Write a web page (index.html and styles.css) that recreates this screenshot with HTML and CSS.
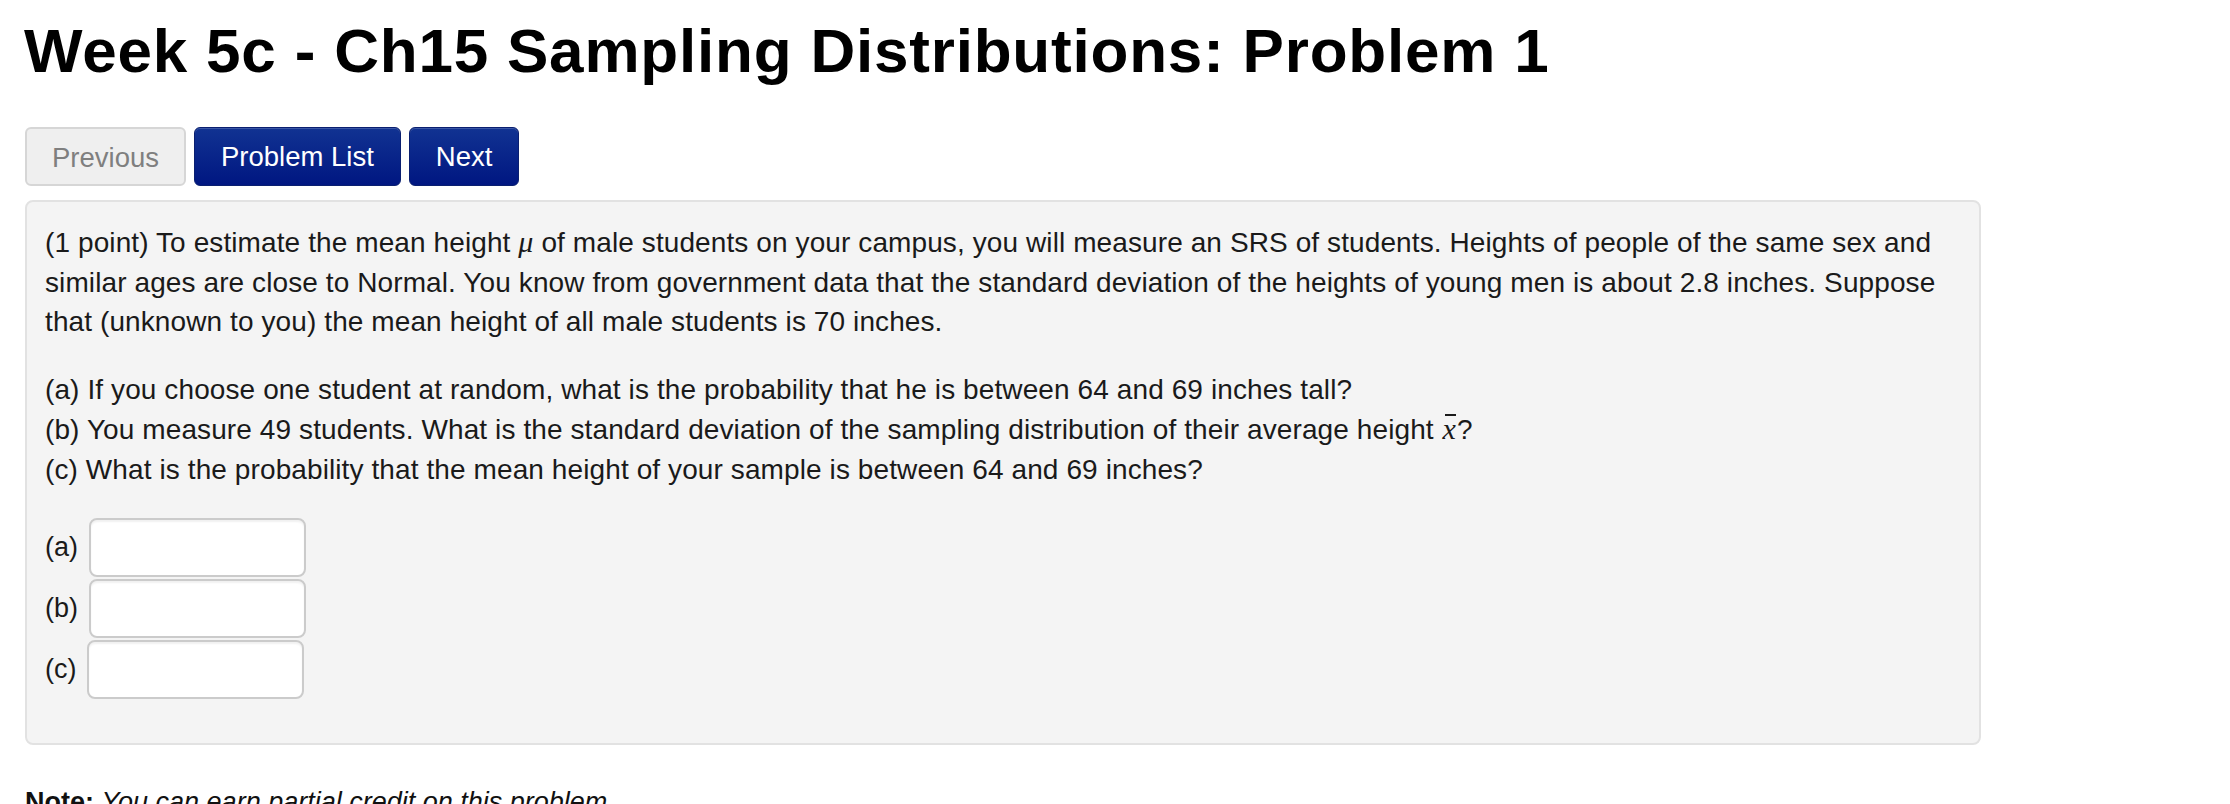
FILE: index.html
```html
<!DOCTYPE html>
<html>
<head>
<meta charset="utf-8">
<title>Week 5c - Ch15 Sampling Distributions: Problem 1</title>
<link rel="stylesheet" href="styles.css">
</head>
<body>
<div class="page">
  <h1 class="title">Week 5c - Ch15 Sampling Distributions: Problem 1</h1>
  <div class="nav">
    <span class="btn btn-disabled">Previous</span>
    <a class="btn btn-primary" href="#">Problem List</a>
    <a class="btn btn-primary" href="#">Next</a>
  </div>
  <div class="problem">
    <p class="para">(1 point) To estimate the mean height <span class="math">μ</span> of male students on your campus, you will measure an SRS of students. Heights of people of the same sex and<br>similar ages are close to Normal. You know from government data that the standard deviation of the heights of young men is about 2.8 inches. Suppose<br>that (unknown to you) the mean height of all male students is 70 inches.</p>
    <p class="para para-gap">(a) If you choose one student at random, what is the probability that he is between 64 and 69 inches tall?<br>(b) You measure 49 students. What is the standard deviation of the sampling distribution of their average height <span class="math xbar">x</span>?<br>(c) What is the probability that the mean height of your sample is between 64 and 69 inches?</p>
    <div class="answers">
      <div class="answer-row"><span class="label">(a)</span><input class="answer" type="text"></div>
      <div class="answer-row"><span class="label">(b)</span><input class="answer" type="text"></div>
      <div class="answer-row"><span class="label">(c)</span><input class="answer" type="text"></div>
    </div>
  </div>
  <p class="note"><b>Note:</b> <i>You can earn partial credit on this problem.</i></p>
</div>
</body>
</html>
```

FILE: styles.css
```css
html, body {
  margin: 0;
  padding: 0;
  background: #ffffff;
}

.page {
  padding-left: 25px;
  font-family: "Liberation Sans", Arial, Helvetica, sans-serif;
  color: #1a1a1a;
}

.title {
  margin: 17px 0 0 -1px;
  font-size: 62px;
  line-height: 67px;
  font-weight: bold;
  letter-spacing: 0.8px;
  color: #000;
}

.nav {
  margin-top: 43px;
  display: flex;
  gap: 8px;
}

.btn {
  box-sizing: border-box;
  height: 59px;
  padding: 9px 25px;
  font-size: 27.5px;
  line-height: 39px;
  border-radius: 6px;
  text-decoration: none;
  display: inline-block;
}

.btn-disabled {
  background: #efefef;
  border: 2px solid #d6d6d6;
  color: #7f7f7f;
}

.btn-primary {
  background: linear-gradient(to bottom, #113392 0%, #001681 100%);
  border: 1px solid #0a1f70;
  box-shadow: inset 0 1px 0 rgba(255,255,255,0.18);
  color: #ffffff;
  padding: 9px 26px;
}

.problem {
  box-sizing: border-box;
  width: 1956px;
  margin-top: 14px;
  padding: 20px 18px 44px 18px;
  background: #f4f4f4;
  border: 2px solid #e2e2e2;
  border-radius: 8px;
  font-size: 28px;
  letter-spacing: 0.1px;
  line-height: 39.5px;
}

.para {
  margin: 0;
}

.para-gap {
  margin-top: 28px;
}

.math {
  font-family: "Liberation Serif", "Times New Roman", serif;
  font-style: italic;
  font-size: 30px;
}

.xbar {
  position: relative;
  padding: 0 1px;
}

.xbar::before {
  content: "";
  position: absolute;
  left: 3px;
  right: 1px;
  top: 2px;
  border-top: 2px solid #1a1a1a;
}

.answers {
  margin-top: 29px;
  display: flex;
  flex-direction: column;
  gap: 2px;
}

.answer-row {
  display: flex;
  align-items: center;
  gap: 11px;
}

.label {
  font-size: 27px;
  line-height: 39px;
  letter-spacing: 0;
}

.answer {
  box-sizing: border-box;
  width: 217px;
  height: 59px;
  margin: 0;
  border: 2px solid #cbcbcb;
  border-radius: 8px;
  background: #ffffff;
  box-shadow: inset 0 2px 2px rgba(0,0,0,0.06);
  font-size: 27px;
  font-family: "Liberation Sans", Arial, sans-serif;
}

.note {
  margin: 38px 0 0 0;
  font-size: 27px;
  line-height: 39px;
  color: #111;
}
```
